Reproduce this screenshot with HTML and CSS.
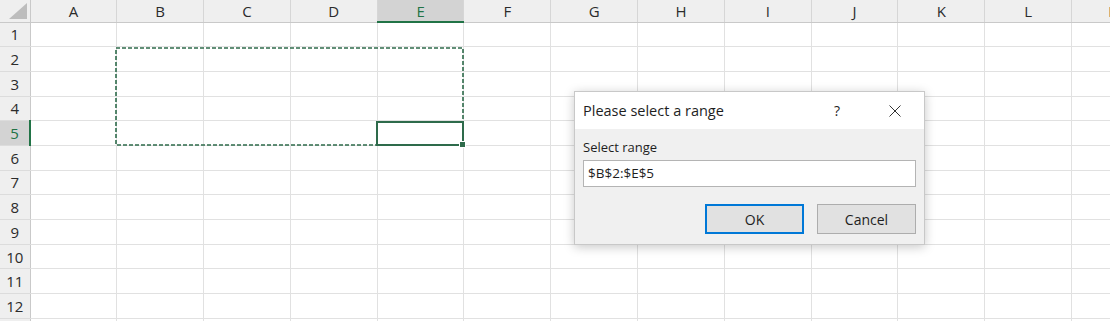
FILE: index.html
```html
<!DOCTYPE html>
<html>
<head>
<meta charset="utf-8">
<link rel="stylesheet" href="styles.css">
</head>
<body>
<div class="sheet">
  <table class="grid">
    <colgroup><col class="col-rh"><col span="13" class="col-c"></colgroup>
    <thead>
      <tr>
        <th class="corner"><svg class="corner-tri" width="30" height="22" viewBox="0 0 30 22"><polygon points="9,19 27,19 27,3" fill="#bdbdbd"/></svg></th>
        <th>A</th><th>B</th><th>C</th><th>D</th><th class="sel-col">E</th><th>F</th><th>G</th><th>H</th><th>I</th><th>J</th><th>K</th><th>L</th><th>M</th>
      </tr>
    </thead>
    <tbody>
      <tr><th>1</th><td></td><td></td><td></td><td></td><td></td><td></td><td></td><td></td><td></td><td></td><td></td><td></td><td></td></tr>
      <tr><th>2</th><td></td><td></td><td></td><td></td><td></td><td></td><td></td><td></td><td></td><td></td><td></td><td></td><td></td></tr>
      <tr><th>3</th><td></td><td></td><td></td><td></td><td></td><td></td><td></td><td></td><td></td><td></td><td></td><td></td><td></td></tr>
      <tr><th>4</th><td></td><td></td><td></td><td></td><td></td><td></td><td></td><td></td><td></td><td></td><td></td><td></td><td></td></tr>
      <tr><th class="sel-row">5</th><td></td><td></td><td></td><td></td><td></td><td></td><td></td><td></td><td></td><td></td><td></td><td></td><td></td></tr>
      <tr><th>6</th><td></td><td></td><td></td><td></td><td></td><td></td><td></td><td></td><td></td><td></td><td></td><td></td><td></td></tr>
      <tr><th>7</th><td></td><td></td><td></td><td></td><td></td><td></td><td></td><td></td><td></td><td></td><td></td><td></td><td></td></tr>
      <tr><th>8</th><td></td><td></td><td></td><td></td><td></td><td></td><td></td><td></td><td></td><td></td><td></td><td></td><td></td></tr>
      <tr><th>9</th><td></td><td></td><td></td><td></td><td></td><td></td><td></td><td></td><td></td><td></td><td></td><td></td><td></td></tr>
      <tr><th>10</th><td></td><td></td><td></td><td></td><td></td><td></td><td></td><td></td><td></td><td></td><td></td><td></td><td></td></tr>
      <tr><th>11</th><td></td><td></td><td></td><td></td><td></td><td></td><td></td><td></td><td></td><td></td><td></td><td></td><td></td></tr>
      <tr><th>12</th><td></td><td></td><td></td><td></td><td></td><td></td><td></td><td></td><td></td><td></td><td></td><td></td><td></td></tr>
      <tr><th></th><td></td><td></td><td></td><td></td><td></td><td></td><td></td><td></td><td></td><td></td><td></td><td></td><td></td></tr>
    </tbody>
  </table>

  <svg class="marquee" width="350" height="100" viewBox="0 0 350 100">
    <rect x="1" y="1" width="347" height="97" fill="none" stroke="#2e6b4b" stroke-width="1.6" stroke-dasharray="4 2"/>
  </svg>
  <div class="active-cell"><span class="fill-handle"></span></div>

  <div class="dialog">
    <div class="dialog-title">
      <span class="title-text">Please select a range</span>
      <span class="help">?</span>
      <svg class="close" width="12" height="12" viewBox="0 0 12 12"><path d="M0.5 0.5 L11.5 11.5 M11.5 0.5 L0.5 11.5" stroke="#333" stroke-width="1" fill="none"/></svg>
    </div>
    <div class="dialog-body">
      <div class="label">Select range</div>
      <div class="input">$B$2:$E$5</div>
      <div class="buttons">
        <div class="btn btn-default">OK</div>
        <div class="btn">Cancel</div>
      </div>
    </div>
  </div>
</div>
</body>
</html>
```

FILE: styles.css
```css
html, body {
  margin: 0;
  padding: 0;
  background: #ffffff;
  overflow: hidden;
}

.sheet {
  position: relative;
  width: 1110px;
  height: 321px;
  overflow: hidden;
  font-family: "Open Sans", "Noto Sans", sans-serif;
}

.grid {
  border-collapse: collapse;
  table-layout: fixed;
  width: calc(30px + 13 * 86.8px);
}

.col-rh { width: 30px; }
.col-c { width: 86.8px; }

.grid th,
.grid td {
  padding: 0;
  box-sizing: border-box;
}

.grid thead th {
  height: 22px;
  background: #efefef;
  color: #2b2b2b;
  font-weight: normal;
  font-size: 15px;
  line-height: 20px;
  text-align: center;
  border-right: 1px solid #d6d6d6;
  border-bottom: 1px solid #c9c9c9;
}

.grid thead th.corner {
  position: relative;
  border-right: 1px solid #c9c9c9;
}

.corner-tri {
  display: block;
  position: absolute;
  left: 0;
  top: 0;
}

.grid tbody th {
  height: 24.7px;
  background: #efefef;
  color: #2b2b2b;
  font-weight: normal;
  font-size: 15px;
  line-height: 22px;
  text-align: center;
  border-right: 1px solid #c9c9c9;
  border-bottom: 1px solid #dcdcdc;
}

.grid td {
  height: 24.7px;
  border-right: 1px solid #e1e1e1;
  border-bottom: 1px solid #e1e1e1;
}

.grid thead th.sel-col {
  background: #d3d3d3;
  color: #217346;
  border-bottom: 2px solid #217346;
}

.grid tbody th.sel-row {
  background: #d3d3d3;
  color: #217346;
  border-right: 2px solid #217346;
}

.marquee {
  position: absolute;
  left: 115px;
  top: 47px;
}

.active-cell {
  position: absolute;
  left: 376px;
  top: 121px;
  width: 88px;
  height: 25px;
  box-sizing: border-box;
  border: 2px solid #2e6b4b;
}

.fill-handle {
  position: absolute;
  right: -4px;
  bottom: -4px;
  width: 5px;
  height: 5px;
  background: #2e6b4b;
  border: 1px solid #fff;
}

.dialog {
  position: absolute;
  left: 574px;
  top: 91px;
  width: 351px;
  height: 154px;
  box-sizing: border-box;
  border: 1px solid #c8c8c8;
  background: #f0f0f0;
  box-shadow: 0 2px 10px rgba(0, 0, 0, 0.22);
  display: flex;
  flex-direction: column;
  font-family: "Open Sans", "Noto Sans", sans-serif;
  color: #1e1e1e;
}

.dialog-title {
  height: 37px;
  background: #ffffff;
  display: flex;
  align-items: center;
  padding-left: 8px;
}

.title-text {
  font-size: 14.5px;
  flex: 1;
}

.help {
  font-size: 14px;
  width: 20px;
  text-align: center;
  margin-right: 42px;
}

.close {
  margin-right: 23px;
}

.dialog-body {
  flex: 1;
  padding: 9px 8px 0 8px;
  display: flex;
  flex-direction: column;
}

.label {
  font-size: 13px;
  line-height: 18px;
}

.input {
  margin-top: 4px;
  height: 27px;
  box-sizing: border-box;
  background: #fff;
  border: 1px solid #b4b4b4;
  font-size: 13.5px;
  line-height: 24px;
  padding-left: 4px;
}

.buttons {
  margin-top: 17px;
  display: flex;
  justify-content: flex-end;
  gap: 13px;
}

.btn {
  width: 99px;
  height: 30px;
  box-sizing: border-box;
  background: #e1e1e1;
  border: 1px solid #adadad;
  font-size: 14px;
  display: flex;
  align-items: center;
  justify-content: center;
}

.btn-default {
  border: 2px solid #0078d7;
}
```
